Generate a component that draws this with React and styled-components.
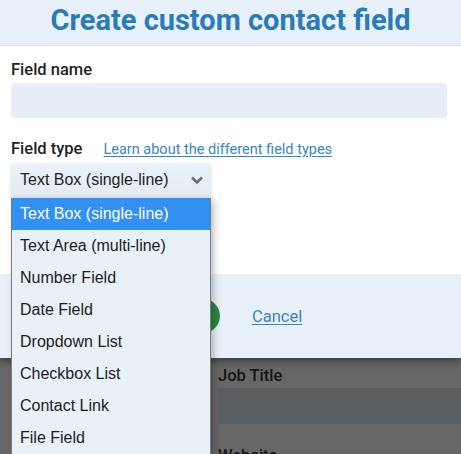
import React from "react";
import styled, { createGlobalStyle } from "styled-components";

const Global = createGlobalStyle`
  html, body { margin: 0; padding: 0; }
  body {
    width: 461px;
    height: 454px;
    overflow: hidden;
    background: #666666;
    font-family: Roboto, "Noto Sans", sans-serif;
  }
`;

const Screen = styled.div`
  position: relative;
  width: 461px;
  height: 454px;
  overflow: hidden;
  display: flex;
  flex-direction: column;
  background: #676767;
`;

const Modal = styled.div`
  position: relative;
  z-index: 2;
  display: flex;
  flex-direction: column;
  background: #ffffff;
  box-shadow: 0 3px 8px rgba(0, 0, 0, 0.45);
`;

const Header = styled.header`
  height: 45px;
  display: flex;
  align-items: center;
  justify-content: center;
  background: #e8f1fa;
  border-bottom: 1px solid #d9e2ea;
`;

const Title = styled.h1`
  margin: 0;
  margin-top: -6px;
  font-family: Roboto, sans-serif;
  font-weight: 700;
  font-size: 29px;
  color: #2b7bb9;
`;

const Body = styled.div`
  display: flex;
  flex-direction: column;
  padding: 14px 14px 77px 11px;
`;

const Label = styled.label`
  display: block;
  font-family: Roboto, sans-serif;
  font-weight: 500;
  font-size: 16.5px;
  line-height: 19px;
  color: #1f1f1f;
`;

const TextInput = styled.div`
  margin-top: 4px;
  height: 35px;
  border-radius: 4px;
  background: #e6eff8;
`;

const TypeRow = styled.div`
  margin-top: 21px;
  display: flex;
  align-items: baseline;
  gap: 21px;
`;

const HelpLink = styled.a`
  font-family: Roboto, sans-serif;
  font-size: 14.5px;
  color: #3a86c2;
  text-decoration: underline;
  text-underline-offset: 2px;
`;

const SelectBox = styled.div`
  margin-top: 5px;
  width: 200px;
  height: 34px;
  box-sizing: border-box;
  display: flex;
  align-items: center;
  justify-content: space-between;
  padding: 0 7px 0 9px;
  border-radius: 4px 4px 0 0;
  background: linear-gradient(#eaf1f8, #e3eaf2);
  box-shadow: 0 2px 4px rgba(0, 0, 0, 0.12);
  font-family: "Liberation Sans", Arial, sans-serif;
  font-size: 16px;
  color: #222;
`;

const Footer = styled.footer`
  height: 84px;
  display: flex;
  align-items: center;
  gap: 32px;
  padding-left: 60px;
  background: #e8f1f9;
`;

const SaveButton = styled.button`
  width: 160px;
  height: 34px;
  border: none;
  border-radius: 17px;
  background: #2a8a3f;
  color: #fff;
  font-family: Roboto, sans-serif;
  font-size: 15px;
`;

const CancelLink = styled.a`
  font-family: Roboto, sans-serif;
  font-size: 16.5px;
  color: #3a86c2;
  text-decoration: underline;
  text-underline-offset: 2px;
`;

const Behind = styled.div`
  flex: 1;
  display: flex;
  flex-direction: column;
  padding: 8px 0 0 218px;
`;

const BehindLabel = styled.div`
  font-family: Roboto, sans-serif;
  font-weight: 500;
  font-size: 16.5px;
  line-height: 19px;
  color: #151515;
`;

const BehindInput = styled.div`
  margin-top: 3px;
  height: 36px;
  background: #5c5f62;
`;

const BehindNext = styled(BehindLabel)`
  margin-top: 22px;
`;

const Listbox = styled.ul`
  position: absolute;
  z-index: 5;
  top: 198px;
  left: 11px;
  width: 200px;
  box-sizing: border-box;
  margin: 0;
  padding: 0;
  list-style: none;
  background: #e8f0f8;
  border: 1px solid #7a7a7a;
  border-top: none;
  box-shadow: 3px 2px 7px rgba(0, 0, 0, 0.25);
`;

const Option = styled.li`
  height: 32px;
  display: flex;
  align-items: center;
  padding-left: 8px;
  font-family: "Liberation Sans", Arial, sans-serif;
  font-size: 16px;
  color: ${(p) => (p.$active ? "#ffffff" : "#1c1c1c")};
  background: ${(p) => (p.$active ? "#3391f5" : "transparent")};
`;

const Chevron = () => (
  <svg width="14" height="10" viewBox="0 0 14 10">
    <path d="M2 2.5 L7 7.5 L12 2.5" fill="none" stroke="#6b6f73" strokeWidth="2.6" />
  </svg>
);

const options = [
  "Text Box (single-line)",
  "Text Area (multi-line)",
  "Number Field",
  "Date Field",
  "Dropdown List",
  "Checkbox List",
  "Contact Link",
  "File Field",
];

export default function App() {
  return (
    <>
      <Global />
      <Screen>
        <Modal>
          <Header>
            <Title>Create custom contact field</Title>
          </Header>
          <Body>
            <Label>Field name</Label>
            <TextInput />
            <TypeRow>
              <Label>Field type</Label>
              <HelpLink>Learn about the different field types</HelpLink>
            </TypeRow>
            <SelectBox>
              <span>Text Box (single-line)</span>
              <Chevron />
            </SelectBox>
          </Body>
          <Footer>
            <SaveButton>Save</SaveButton>
            <CancelLink>Cancel</CancelLink>
          </Footer>
        </Modal>
        <Behind>
          <BehindLabel>Job Title</BehindLabel>
          <BehindInput />
          <BehindNext>Website</BehindNext>
        </Behind>
        <Listbox>
          {options.map((o, i) => (
            <Option key={o} $active={i === 0}>
              {o}
            </Option>
          ))}
        </Listbox>
      </Screen>
    </>
  );
}
